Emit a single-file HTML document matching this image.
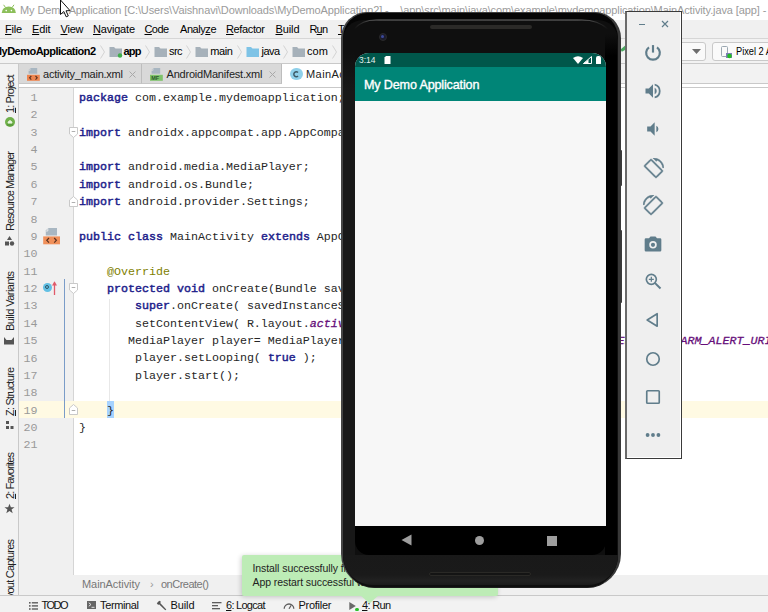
<!DOCTYPE html><html><head><meta charset="utf-8"><style>
*{box-sizing:border-box;margin:0;padding:0}
body{width:768px;height:612px;overflow:hidden;position:relative;background:#fff;font-family:"Liberation Sans",sans-serif;font-size:11px;color:#000}
.a{position:absolute}
.t{position:absolute;white-space:pre;line-height:1}
.code{position:absolute;left:79px;top:89.8px;font-family:"Liberation Mono",monospace;font-size:11.67px;line-height:17.38px;white-space:pre;color:#262626}
.ln{position:absolute;left:18.5px;width:19px;top:89.9px;font-family:"Liberation Mono",monospace;font-size:11.67px;line-height:17.38px;white-space:pre;color:#999;text-align:right}
.kw{color:#20208a;-webkit-text-stroke:0.45px #20208a}
.an{color:#808000}
.sf{color:#660e7a;font-style:italic;-webkit-text-stroke:0.3px #660e7a}
.ul{text-decoration:underline;text-underline-offset:1px}
</style></head><body>
<div class="a" style="left:0;top:0;width:768px;height:20px;background:#fff"></div>
<svg class="a" style="left:1px;top:3px" width="16" height="12" viewBox="0 0 16 12"><path d="M0.7 10 A7.1 6.6 0 0 1 14.9 10 Z" fill="#8cbf5a"/><path d="M2.6 1.8 L4.6 4.6 M13 1.8 L11 4.6" stroke="#8cbf5a" stroke-width="1"/><circle cx="5.2" cy="7.6" r="0.8" fill="#fff"/><circle cx="10.4" cy="7.6" r="0.8" fill="#fff"/></svg>
<div class="t" style="left:20px;top:4.69px;font-size:11px;color:#9b9b9b;letter-spacing:-0.11px;">My Demo Application [C:\Users\Vaishnavi\Downloads\MyDemoApplication2] - ...\app\src\main\java\com\example\mydemoapplication\MainActivity.java [app] - Android Studio</div>
<div class="a" style="left:0;top:20px;width:768px;height:19px;background:#f0f0f0;border-bottom:1px solid #d6d6d6"></div>
<div class="t" style="left:5px;top:23.69px;font-size:11px;color:#000;letter-spacing:-0.242px;"><span class="ul">F</span>ile</div>
<div class="t" style="left:32px;top:23.69px;font-size:11px;color:#000;letter-spacing:-0.152px;"><span class="ul">E</span>dit</div>
<div class="t" style="left:60.5px;top:23.69px;font-size:11px;color:#000;letter-spacing:-0.215px;"><span class="ul">V</span>iew</div>
<div class="t" style="left:93px;top:23.69px;font-size:11px;color:#000;letter-spacing:-0.202px;"><span class="ul">N</span>avigate</div>
<div class="t" style="left:144.5px;top:23.69px;font-size:11px;color:#000;letter-spacing:-0.599px;"><span class="ul">C</span>ode</div>
<div class="t" style="left:180px;top:23.69px;font-size:11px;color:#000;letter-spacing:-0.439px;">Analy<span class="ul">z</span>e</div>
<div class="t" style="left:226px;top:23.69px;font-size:11px;color:#000;letter-spacing:-0.368px;"><span class="ul">R</span>efactor</div>
<div class="t" style="left:275.5px;top:23.69px;font-size:11px;color:#000;letter-spacing:-0.115px;"><span class="ul">B</span>uild</div>
<div class="t" style="left:309.5px;top:23.69px;font-size:11px;color:#000;letter-spacing:-0.840px;">R<span class="ul">u</span>n</div>
<div class="t" style="left:338px;top:23.69px;font-size:11px;color:#000;letter-spacing:0.080px;"><span class="ul">T</span>ools</div>
<div class="a" style="left:0;top:39px;width:768px;height:25px;background:#f2f2f2;border-bottom:1px solid #c9c9c9"></div>
<div class="t" style="left:-1px;top:46.19px;font-size:11px;color:#000;letter-spacing:-0.514px;font-weight:bold;">lyDemoApplication2</div>
<svg class="a" style="left:99.5px;top:45px" width="6" height="14" viewBox="0 0 6 14"><path d="M0.5 0.5 L4.5 7 L0.5 13.5" stroke="#d0d0d0" stroke-width="0.9" fill="none"/></svg>
<svg class="a" style="left:108.5px;top:46px" width="14" height="12" viewBox="0 0 14 12"><path d="M0.5 1 H5 L6.5 2.5 H13 V11 H0.5 Z" fill="#a6b1ba"/><circle cx="11" cy="9.5" r="2.2" fill="#3fae4a"/></svg>
<div class="t" style="left:123.5px;top:46.19px;font-size:11px;color:#000;letter-spacing:-0.778px;font-weight:bold;">app</div>
<svg class="a" style="left:144.5px;top:45px" width="6" height="14" viewBox="0 0 6 14"><path d="M0.5 0.5 L4.5 7 L0.5 13.5" stroke="#d0d0d0" stroke-width="0.9" fill="none"/></svg>
<svg class="a" style="left:153.5px;top:46px" width="14" height="12" viewBox="0 0 14 12"><path d="M0.5 1 H5 L6.5 2.5 H13 V11 H0.5 Z" fill="#a6b1ba"/></svg>
<div class="t" style="left:169px;top:46.19px;font-size:11px;color:#000;letter-spacing:-0.582px;">src</div>
<svg class="a" style="left:186px;top:45px" width="6" height="14" viewBox="0 0 6 14"><path d="M0.5 0.5 L4.5 7 L0.5 13.5" stroke="#d0d0d0" stroke-width="0.9" fill="none"/></svg>
<svg class="a" style="left:194.5px;top:46px" width="14" height="12" viewBox="0 0 14 12"><path d="M0.5 1 H5 L6.5 2.5 H13 V11 H0.5 Z" fill="#a6b1ba"/></svg>
<div class="t" style="left:210.3px;top:46.19px;font-size:11px;color:#000;letter-spacing:-0.448px;">main</div>
<svg class="a" style="left:236.5px;top:45px" width="6" height="14" viewBox="0 0 6 14"><path d="M0.5 0.5 L4.5 7 L0.5 13.5" stroke="#d0d0d0" stroke-width="0.9" fill="none"/></svg>
<svg class="a" style="left:245.5px;top:46px" width="14" height="12" viewBox="0 0 14 12"><path d="M0.5 1 H5 L6.5 2.5 H13 V11 H0.5 Z" fill="#7ec3e6"/></svg>
<div class="t" style="left:261.5px;top:46.19px;font-size:11px;color:#000;letter-spacing:-0.560px;">java</div>
<svg class="a" style="left:282.5px;top:45px" width="6" height="14" viewBox="0 0 6 14"><path d="M0.5 0.5 L4.5 7 L0.5 13.5" stroke="#d0d0d0" stroke-width="0.9" fill="none"/></svg>
<svg class="a" style="left:292px;top:46px" width="14" height="12" viewBox="0 0 14 12"><path d="M0.5 1 H5 L6.5 2.5 H13 V11 H0.5 Z" fill="#a6b1ba"/></svg>
<div class="t" style="left:307px;top:46.19px;font-size:11px;color:#000;letter-spacing:0.110px;">com</div>
<svg class="a" style="left:331.5px;top:45px" width="6" height="14" viewBox="0 0 6 14"><path d="M0.5 0.5 L4.5 7 L0.5 13.5" stroke="#d0d0d0" stroke-width="0.9" fill="none"/></svg>
<svg class="a" style="left:620px;top:45px" width="6" height="7" viewBox="0 0 6 7"><path d="M0.5 4.5 L5.5 0.3 V4.8 L1.8 6.8 Z" fill="#4aa860"/></svg>
<div class="a" style="left:640px;top:42px;width:66px;height:19px;background:#fafafa;border:1px solid #c9c9c9;border-radius:3px"></div>
<svg class="a" style="left:692px;top:49px" width="9" height="6"><path d="M0 0 H9 L4.5 5 Z" fill="#6e6e6e"/></svg>
<div class="a" style="left:712px;top:42px;width:70px;height:19px;background:#fafafa;border:1px solid #c9c9c9;border-radius:3px"></div>
<svg class="a" style="left:721px;top:46px" width="12" height="13" viewBox="0 0 12 13"><rect x="0.5" y="0.5" width="6" height="10" rx="1" fill="none" stroke="#9aa7b0"/><rect x="5" y="7" width="6" height="5" fill="#7d7db8"/><circle cx="8.5" cy="10" r="2.3" fill="#22bb22"/></svg>
<div class="t" style="left:736px;top:46.49px;font-size:11px;color:#000;transform:scaleX(0.84);transform-origin:0 0;">Pixel 2 API</div>
<div class="a" style="left:0;top:64px;width:19px;height:531px;background:#f2f2f2;border-right:1px solid #c9c9c9"></div>
<div class="a" style="left:19px;top:64px;width:749px;height:20px;background:#f2f2f2;border-bottom:1px solid #c9c9c9"></div>
<div class="a" style="left:19px;top:84px;width:749px;height:4px;background:#fff;border-bottom:1px solid #c9c9c9"></div>
<div class="a" style="left:19px;top:64px;width:123px;height:20px;background:#d9d9d9;border-right:1px solid #bdbdbd;border-bottom:1px solid #c6c6c6"></div>
<div class="a" style="left:142px;top:64px;width:140px;height:20px;background:#d9d9d9;border-right:1px solid #bdbdbd;border-bottom:1px solid #c6c6c6"></div>
<div class="a" style="left:282px;top:64px;width:120px;height:23px;background:#fff"></div>
<div class="t" style="left:43px;top:68.69px;font-size:11px;color:#222;letter-spacing:-0.234px;">activity_main.xml</div>
<div class="t" style="left:166.5px;top:68.69px;font-size:11px;color:#222;letter-spacing:-0.203px;">AndroidManifest.xml</div>
<div class="t" style="left:306px;top:68.69px;font-size:11px;color:#222;letter-spacing:0.431px;">MainActivity.java</div>
<div class="t" style="left:5.26px;top:113px;font-size:11px;color:#222;letter-spacing:-0.885px;transform:rotate(-90deg);transform-origin:0 0"><span class="ul">1</span>: Project</div>
<div class="a" style="left:5px;top:117px;width:10px;height:10px;border-radius:50%;background:#6fb04a"></div>
<svg class="a" style="left:6px;top:118px" width="8" height="8" viewBox="0 0 8 8"><path d="M2 5 A2 2 0 0 1 6 5 Z M4 2 V4" stroke="#e8f4e0" stroke-width="1" fill="#e8f4e0"/><path d="M1 7 L7 7" stroke="#4a8a30"/></svg>
<div class="t" style="left:5.26px;top:230.6px;font-size:11px;color:#222;letter-spacing:-0.903px;transform:rotate(-90deg);transform-origin:0 0">Resource Manager</div>
<svg class="a" style="left:4px;top:236px" width="11" height="10" viewBox="0 0 11 10"><path d="M5.5 0 L8 4 H3 Z" fill="#555"/><rect x="1" y="5.5" width="4" height="4" fill="#555"/><circle cx="8" cy="7.5" r="2.2" fill="#555"/></svg>
<div class="t" style="left:5.26px;top:330.5px;font-size:11px;color:#222;letter-spacing:-0.543px;transform:rotate(-90deg);transform-origin:0 0">Build Variants</div>
<svg class="a" style="left:3px;top:336px" width="12" height="9" viewBox="0 0 12 9"><path d="M1 8.5 V1 L3.5 4 H8.5 L11 1 V8.5 Z" fill="#555"/></svg>
<div class="t" style="left:5.26px;top:415.9px;font-size:11px;color:#222;letter-spacing:-0.769px;transform:rotate(-90deg);transform-origin:0 0"><span class="ul">Z</span>: Structure</div>
<svg class="a" style="left:6px;top:421px" width="8" height="9" viewBox="0 0 8 9"><rect x="0" y="0" width="3" height="3" fill="#555"/><rect x="0" y="5" width="3" height="3" fill="#555"/><rect x="4.5" y="5" width="3" height="3" fill="#555"/></svg>
<div class="t" style="left:5.26px;top:499.4px;font-size:11px;color:#222;letter-spacing:-0.952px;transform:rotate(-90deg);transform-origin:0 0"><span class="ul">2</span>: Favorites</div>
<svg class="a" style="left:4px;top:503px" width="11" height="11" viewBox="0 0 24 24"><path d="M12 1.5 L15 9 H23 L16.5 14 L19 22.5 L12 17.5 L5 22.5 L7.5 14 L1 9 H9 Z" fill="#555"/></svg>
<div class="t" style="left:5.26px;top:609.2px;font-size:11px;color:#222;letter-spacing:-0.766px;transform:rotate(-90deg);transform-origin:0 0">Layout Captures</div>
<svg class="a" style="left:27px;top:68px" width="13" height="13" viewBox="0 0 13 13"><path d="M3.5 0 H10.2 V5.7 H1.6 V2 Z" fill="#a8b6c1"/><path d="M3 0.2 V2.3 H1" stroke="#d9d9d9" stroke-width="0.8" fill="none"/><rect x="0" y="6.8" width="12.8" height="6" fill="#ee8550"/><path d="M4.3 8 L2.6 9.8 L4.3 11.6 M8.5 8 L10.2 9.8 L8.5 11.6" stroke="#5a3220" stroke-width="1.1" fill="none"/></svg>
<svg class="a" style="left:150px;top:68px" width="13" height="13" viewBox="0 0 13 13"><path d="M3.5 0 H10.2 V5.7 H1.6 V2 Z" fill="#a8b6c1"/><path d="M3 0.2 V2.3 H1" stroke="#d9d9d9" stroke-width="0.8" fill="none"/><rect x="0" y="6.8" width="12.8" height="6" fill="#7ec36a"/><text x="1.2" y="12.3" font-family="Liberation Sans" font-size="5.5" font-weight="bold" fill="#2d5a2d">MF</text></svg>
<div class="a" style="left:290px;top:67.5px;width:12.5px;height:12.5px;border-radius:50%;background:#8fd0ea"></div>
<svg class="a" style="left:290px;top:67.5px" width="12.5" height="12.5" viewBox="0 0 12.5 12.5"><path d="M8 4.6 A2.4 2.4 0 1 0 8 7.9" stroke="#3d5a66" stroke-width="1.5" fill="none"/></svg>
<svg class="a" style="left:128.5px;top:70.5px" width="7" height="7" viewBox="0 0 7 7"><path d="M0.5 0.5 L6.5 6.5 M6.5 0.5 L0.5 6.5" stroke="#a8a8a8" stroke-width="1"/></svg>
<svg class="a" style="left:269px;top:70.5px" width="7" height="7" viewBox="0 0 7 7"><path d="M0.5 0.5 L6.5 6.5 M6.5 0.5 L0.5 6.5" stroke="#a8a8a8" stroke-width="1"/></svg>
<div class="a" style="left:19px;top:88px;width:55px;height:487px;background:#f0f0f0;border-right:1px solid #d5d5d5"></div>
<div class="a" style="left:19px;top:400.7px;width:749px;height:17.33px;background:#fffae3"></div>
<svg class="a" style="left:43px;top:228px" width="17.5" height="17" viewBox="0 0 17.5 17"><path d="M5.2 0 H14 V7.4 H2.8 V2.6 Z" fill="#a9b7c2"/><path d="M4.8 0.2 V3 H2.9" stroke="#eee" stroke-width="0.9" fill="none"/><rect x="0.2" y="8.4" width="16.8" height="7.9" fill="#f0905a"/><path d="M6 10 L3.8 12.3 L6 14.6 M11.2 10 L13.4 12.3 L11.2 14.6" stroke="#5a3220" stroke-width="1.2" fill="none"/></svg>
<div class="a" style="left:42.9px;top:282.9px;width:9px;height:9px;border-radius:50%;background:#62c0e4"></div>
<div class="a" style="left:45.4px;top:285.4px;width:4px;height:4px;border-radius:50%;border:1px solid #2e5566"></div>
<svg class="a" style="left:51.5px;top:280.5px" width="5" height="14" viewBox="0 0 5 14"><path d="M2.5 1.5 V14" stroke="#e05a6a" stroke-width="1.3"/><path d="M0 4.5 L2.5 0.3 L5 4.5 Z" fill="#e05a6a"/></svg>
<div class="a" style="left:64px;top:279.2px;width:1.3px;height:138.5px;background:#7a9cc8"></div>
<svg class="a" style="left:69px;top:127px" width="9.5" height="11.5" viewBox="0 0 9.5 11.5"><path d="M0.5 0.5 H8.5 V7 L4.5 10.5 L0.5 7 Z" fill="#fff" stroke="#c9c9c9" stroke-width="1"/><path d="M2.7 4.5 H6.3" stroke="#b0b0b0" stroke-width="1"/></svg>
<svg class="a" style="left:69px;top:196px" width="9.5" height="11.5" viewBox="0 0 9.5 11.5"><path d="M0.5 10.5 H8.5 V4 L4.5 0.5 L0.5 4 Z" fill="#fff" stroke="#c9c9c9" stroke-width="1"/><path d="M2.7 6.5 H6.3" stroke="#b0b0b0" stroke-width="1"/></svg>
<svg class="a" style="left:69px;top:283px" width="9.5" height="11.5" viewBox="0 0 9.5 11.5"><path d="M0.5 0.5 H8.5 V7 L4.5 10.5 L0.5 7 Z" fill="#fff" stroke="#c9c9c9" stroke-width="1"/><path d="M2.7 4.5 H6.3" stroke="#b0b0b0" stroke-width="1"/></svg>
<svg class="a" style="left:69px;top:404px" width="9.5" height="11.5" viewBox="0 0 9.5 11.5"><path d="M0.5 10.5 H8.5 V4 L4.5 0.5 L0.5 4 Z" fill="#fff" stroke="#c9c9c9" stroke-width="1"/><path d="M2.7 6.5 H6.3" stroke="#b0b0b0" stroke-width="1"/></svg>
<div class="a" style="left:108.5px;top:298.5px;width:1px;height:102px;background:#e8e8e8"></div>
<div class="ln">1
2
3
4
5
6
7
8
9
10
11
12
13
14
15
16
17
18
19
20
21</div>
<div class="a" style="left:107px;top:401px;width:7px;height:16.8px;background:#a6d2ff"></div>
<div class="code"><span class="kw">package</span> com.example.mydemoapplication;

<span class="kw">import</span> androidx.appcompat.app.AppCompatActivity;

<span class="kw">import</span> android.media.MediaPlayer;
<span class="kw">import</span> android.os.Bundle;
<span class="kw">import</span> android.provider.Settings;

<span class="kw">public</span> <span class="kw">class</span> MainActivity <span class="kw">extends</span> AppCompatActivity {

    <span class="an">@Override</span>
    <span class="kw">protected</span> <span class="kw">void</span> onCreate(Bundle savedInstanceState) {
        <span class="kw">super</span>.onCreate( savedInstanceState );
        setContentView( R.layout.<span class="sf">activity_main</span> );
       MediaPlayer player= MediaPlayer.create( getContext(),Settings.System.<span class="sf">DEFAULT_ALARM_ALERT_URI</span> );
        player.setLooping( <span class="kw">true</span> );
        player.start();

    }
}
</div>
<div class="a" style="left:19px;top:575px;width:749px;height:20px;background:#f0f0f0"></div>
<div class="t" style="left:82px;top:578.69px;font-size:11px;color:#777;letter-spacing:-0.062px;">MainActivity</div>
<div class="t" style="left:150px;top:578.69px;font-size:11px;color:#999;">›</div>
<div class="t" style="left:161px;top:578.69px;font-size:11px;color:#777;letter-spacing:-0.509px;">onCreate()</div>
<div class="a" style="left:0;top:595px;width:768px;height:17px;background:#f2f2f2;border-top:1px solid #c9c9c9"></div>
<div class="t" style="left:41.5px;top:599.99px;font-size:11px;color:#111;letter-spacing:-1.526px;">TODO</div>
<div class="t" style="left:100px;top:599.99px;font-size:11px;color:#111;letter-spacing:-0.367px;">Terminal</div>
<div class="t" style="left:170.5px;top:599.99px;font-size:11px;color:#111;letter-spacing:-0.115px;">Build</div>
<div class="t" style="left:226px;top:599.99px;font-size:11px;color:#111;letter-spacing:-0.720px;"><span class="ul">6</span>: Logcat</div>
<div class="t" style="left:298.5px;top:599.99px;font-size:11px;color:#111;letter-spacing:-0.263px;">Profiler</div>
<div class="t" style="left:362px;top:599.99px;font-size:11px;color:#111;letter-spacing:-0.682px;"><span class="ul">4</span>: Run</div>
<svg class="a" style="left:28.5px;top:601.5px" width="9.5" height="8" viewBox="0 0 9.5 8"><g fill="#5e5e5e"><rect x="0" y="0" width="1.6" height="1.6"/><rect x="0" y="3.1" width="1.6" height="1.6"/><rect x="0" y="6.2" width="1.6" height="1.6"/><rect x="2.8" y="0.1" width="6.5" height="1.4"/><rect x="2.8" y="3.2" width="6.5" height="1.4"/><rect x="2.8" y="6.3" width="6.5" height="1.4"/></g></svg>
<svg class="a" style="left:87px;top:601px" width="9" height="8" viewBox="0 0 9 8"><rect width="9" height="8" fill="#666"/><path d="M1.8 1.8 L4 3.5 L1.8 5.2" stroke="#eee" stroke-width="0.9" fill="none"/><path d="M4.5 6.3 H7.5" stroke="#eee" stroke-width="0.9"/></svg>
<svg class="a" style="left:155.5px;top:600px" width="11" height="10.5" viewBox="0 0 11 10.5"><path d="M0.8 3.2 L3.2 0.8 L5 1.8 L4.2 3 L10.3 9.5 L9.3 10.3 L3 4.2 L2.2 5 Z" fill="#555"/></svg>
<svg class="a" style="left:212px;top:602px" width="10" height="7.5" viewBox="0 0 10 7.5"><g fill="#5e5e5e"><rect x="0" y="0" width="9.5" height="1.3"/><rect x="0" y="3" width="6" height="1.3"/><rect x="0" y="6" width="8" height="1.3"/></g></svg>
<svg class="a" style="left:283px;top:601.5px" width="12" height="7" viewBox="0 0 12 7"><path d="M1.2 6.8 A4.8 4.8 0 0 1 10.8 6.8" stroke="#5e5e5e" stroke-width="1.3" fill="none"/><path d="M6 6.8 L8.2 3.2" stroke="#5e5e5e" stroke-width="1.2"/></svg>
<svg class="a" style="left:349px;top:601.5px" width="7" height="8" viewBox="0 0 7 8"><path d="M0.3 0 L6.8 4 L0.3 8 Z" fill="#6a6a6a"/></svg>
<div class="a" style="left:355.4px;top:607.5px;width:3.6px;height:3.6px;border-radius:50%;background:#2bc02b"></div>
<div class="a" style="left:241.5px;top:555px;width:256px;height:40.5px;background:#bdecb6;border-radius:2px;box-shadow:-1px 1px 5px rgba(0,0,0,0.2)"></div>
<svg class="a" style="left:360px;top:595px" width="19" height="9" viewBox="0 0 19 9"><path d="M0 0 H19 L9.5 8.5 Z" fill="#bdecb6"/></svg>
<div class="t" style="left:252.5px;top:563.11px;font-size:10.5px;color:#222;letter-spacing:-0.08px;">Install successfully finished in 3 s 61 ms.</div>
<div class="t" style="left:252.5px;top:576.61px;font-size:10.5px;color:#222;letter-spacing:-0.08px;">App restart successful without requiring a re-install.</div>
<div class="a" style="left:616px;top:149.5px;width:6px;height:36px;background:#3a3a3a;border-radius:1px"></div>
<div class="a" style="left:616px;top:229.5px;width:6px;height:73.5px;background:#3a3a3a;border-radius:1px"></div>
<div class="a" style="left:340.5px;top:12px;width:280px;height:576px;border-radius:26px 26px 34px 34px;background:#050505;border-style:solid;border-color:#3c3c3c #383838 #1e1e1e #454545;border-width:1px 3px 1px 2.5px"></div>
<div class="a" style="left:342.5px;top:19.5px;width:275px;height:567.5px;border-radius:20px 20px 31px 31px;background:#0f0f0f"></div>
<div class="a" style="left:605px;top:34px;width:12px;height:521px;background:linear-gradient(#0f0f0f,#000 22px)"></div>
<div class="a" style="left:342.5px;top:52px;width:12px;height:503px;background:linear-gradient(#0f0f0f,#181818 40px)"></div>
<svg class="a" style="left:350px;top:17px" width="262" height="16" viewBox="0 0 262 16"><defs><linearGradient id="rg" x1="0" x2="1"><stop offset="0" stop-color="#6e6e6e" stop-opacity="0"/><stop offset="0.1" stop-color="#707070"/><stop offset="0.88" stop-color="#707070"/><stop offset="1" stop-color="#6e6e6e" stop-opacity="0"/></linearGradient></defs><path d="M4 12 Q12 3 26 3 H232 Q248 3 258 12" stroke="url(#rg)" stroke-width="1.1" fill="none"/></svg>
<div class="a" style="left:342.5px;top:555px;width:275px;height:29.5px;border-radius:0 0 30px 30px;background:linear-gradient(#191919 0,#1a1a1a 20px,#222 26px,#1c1c1c 29.5px)"></div>
<div class="a" style="left:429.5px;top:25px;width:102px;height:4px;border-radius:2px;background:#2b2a28"></div>
<div class="a" style="left:378.5px;top:32.5px;width:8px;height:8px;border-radius:50%;background:#1b1b2e;border:1px solid #2a2a2a"></div>
<div class="a" style="left:381px;top:35px;width:3px;height:3px;border-radius:50%;background:#3c4a9a"></div>
<div class="a" style="left:354.5px;top:52.5px;width:251px;height:502px;border-radius:14px 14px 14px 14px;background:#000"></div>
<div class="a" style="left:354.5px;top:52.5px;width:251px;height:473.5px;border-radius:14px 14px 0 0;background:#f7f7f7;overflow:hidden"><div class="a" style="left:0;top:0;width:251px;height:14px;background:#00574b"></div><div class="a" style="left:0;top:14px;width:251px;height:34px;background:#008577"></div></div>
<div class="t" style="left:359px;top:56.30px;font-size:8.5px;color:#e6f0ee;">3:14</div>
<svg class="a" style="left:384px;top:56px" width="7" height="8" viewBox="0 0 7 8"><path d="M2 0 H6.5 V8 H0.5 V1.5 Z" fill="#fff"/></svg>
<svg class="a" style="left:573px;top:56px" width="10" height="8" viewBox="0 0 10 8"><path d="M0 2 Q5 -1.5 10 2 L5 8 Z" fill="#fff"/></svg>
<svg class="a" style="left:583px;top:56px" width="9" height="8" viewBox="0 0 9 8"><path d="M8.5 0.5 V7.5 H0.5 Z" fill="none" stroke="#fff" stroke-width="1"/><path d="M5.5 3.5 V8 H0 Z" fill="#fff"/></svg>
<div class="a" style="left:595.5px;top:56px;width:5.5px;height:8px;background:#fff;border-radius:2px 2px 0.5px 0.5px"></div>
<div class="t" style="left:364px;top:78.63px;font-size:12.6px;color:#fff;letter-spacing:-0.159px;-webkit-text-stroke:0.35px #fff;">My Demo Application</div>
<svg class="a" style="left:401px;top:534px" width="11" height="12" viewBox="0 0 11 12"><path d="M10.5 0.5 V11.5 L0.5 6 Z" fill="#9e9e9e"/></svg>
<div class="a" style="left:474.8px;top:535.8px;width:9.4px;height:9.4px;border-radius:50%;background:#9e9e9e"></div>
<div class="a" style="left:546.5px;top:535.5px;width:10px;height:10px;background:#9e9e9e"></div>
<div class="a" style="left:429px;top:571.5px;width:102px;height:4px;border-radius:2px;background:#141414;border:1px solid #2a2926"></div>
<div class="a" style="left:625px;top:11px;width:57px;height:447.5px;background:#efefef;border:1px solid #3a3a3a;border-left:2px solid #6a6a6a;box-shadow:inset -1px -1px 0 #fff"></div>
<div class="a" style="left:639px;top:23.5px;width:6px;height:1.2px;background:#607d8b"></div>
<svg class="a" style="left:661px;top:20px" width="8" height="8" viewBox="0 0 8 8"><path d="M1 1 L7 7 M7 1 L1 7" stroke="#607d8b" stroke-width="1.2"/></svg>
<svg class="a" style="left:643.0px;top:43.2px" width="20" height="20" viewBox="0 0 24 24"><path d="M12 2.5 V11.5" stroke="#607d8b" stroke-width="2.6" fill="none"/><path d="M16.8 5.2 A8.2 8.2 0 1 1 7.2 5.2" stroke="#607d8b" stroke-width="2.6" fill="none"/></svg>
<svg class="a" style="left:643.0px;top:81.0px" width="20" height="20" viewBox="0 0 24 24"><path d="M3 9 V15 H7 L12 20 V4 L7 9 Z M16.5 12 A4.5 4.5 0 0 0 14 8 V16 A4.5 4.5 0 0 0 16.5 12 Z M14 3.2 V5.3 A7 7 0 0 1 14 18.7 V20.8 A9 9 0 0 0 14 3.2 Z" fill="#607d8b"/></svg>
<svg class="a" style="left:643.0px;top:119.4px" width="20" height="20" viewBox="0 0 24 24"><path d="M5 9 V15 H9 L14 20 V4 L9 9 Z M18.5 12 A4.5 4.5 0 0 0 16 8 V16 A4.5 4.5 0 0 0 18.5 12 Z" fill="#607d8b"/></svg>
<svg class="a" style="left:642.5px;top:157.5px" width="21" height="21" viewBox="0 0 24 24"><path d="M16.48 2.52c3.27 1.55 5.61 4.72 5.97 8.48h1.5C23.44 4.84 18.29 0 12 0l-.66.03 3.81 3.81 1.33-1.32z M10.23 1.75c-.59-.59-1.54-.59-2.12 0L1.75 8.11c-.59.59-.59 1.540 0 2.12l12.02 12.02c.59.59 1.54.59 2.12 0l6.36-6.36c.59-.59.59-1.54 0-2.12L10.23 1.75z M14.83 21.19L2.81 9.17l6.36-6.36 12.02 12.02-6.360 6.36z" fill="#607d8b" fill-rule="evenodd" stroke="#607d8b" stroke-width="0.6"/></svg>
<svg class="a" style="left:642.5px;top:195.1px" width="21" height="21" viewBox="0 0 24 24"><g transform="translate(24 0) scale(-1 1)"><path d="M16.48 2.52c3.27 1.55 5.61 4.72 5.97 8.48h1.5C23.44 4.84 18.29 0 12 0l-.66.03 3.81 3.81 1.33-1.32z M10.23 1.75c-.59-.59-1.54-.59-2.12 0L1.75 8.11c-.59.59-.59 1.540 0 2.12l12.02 12.02c.59.59 1.54.59 2.12 0l6.36-6.36c.59-.59.59-1.54 0-2.12L10.23 1.75z M14.83 21.19L2.81 9.17l6.36-6.36 12.02 12.02-6.360 6.36z" fill="#607d8b" fill-rule="evenodd" stroke="#607d8b" stroke-width="0.6"/></g></svg>
<svg class="a" style="left:643.0px;top:233.8px" width="20" height="20" viewBox="0 0 24 24"><path d="M9 3 L7.2 5 H3.5 A1.5 1.5 0 0 0 2 6.5 V19.5 A1.5 1.5 0 0 0 3.5 21 H20.5 A1.5 1.5 0 0 0 22 19.5 V6.5 A1.5 1.5 0 0 0 20.5 5 H16.8 L15 3 Z M12 8.5 A4.5 4.5 0 1 1 12 17.5 A4.5 4.5 0 1 1 12 8.5 Z M12 10.5 A2.5 2.5 0 1 0 12 15.5 A2.5 2.5 0 1 0 12 10.5 Z" fill="#607d8b" fill-rule="evenodd"/></svg>
<svg class="a" style="left:643.0px;top:271.4px" width="20" height="20" viewBox="0 0 24 24"><circle cx="10" cy="10" r="6" stroke="#607d8b" stroke-width="2" fill="none"/><path d="M14.5 14.5 L21 21" stroke="#607d8b" stroke-width="2.4"/><path d="M10 7 V13 M7 10 H13" stroke="#607d8b" stroke-width="1.5"/></svg>
<svg class="a" style="left:643.0px;top:310.3px" width="20" height="20" viewBox="0 0 24 24"><path d="M17 4.5 V19.5 L5 12 Z" stroke="#607d8b" stroke-width="2" fill="none" stroke-linejoin="round"/></svg>
<svg class="a" style="left:643.0px;top:349.0px" width="20" height="20" viewBox="0 0 24 24"><circle cx="12" cy="12" r="7.5" stroke="#607d8b" stroke-width="2" fill="none"/></svg>
<svg class="a" style="left:643.0px;top:386.8px" width="20" height="20" viewBox="0 0 24 24"><rect x="4.5" y="4.5" width="15" height="15" rx="1" stroke="#607d8b" stroke-width="2" fill="none"/></svg>
<svg class="a" style="left:643.0px;top:425.2px" width="20" height="20" viewBox="0 0 24 24"><circle cx="5.5" cy="12" r="2.3" fill="#607d8b"/><circle cx="12" cy="12" r="2.3" fill="#607d8b"/><circle cx="18.5" cy="12" r="2.3" fill="#607d8b"/></svg>
<svg class="a" style="left:59px;top:-1px" width="13" height="19" viewBox="0 0 13 19"><path d="M1.5 1 V15.5 L4.8 12.5 L7.2 17.8 L9.3 16.9 L7 11.8 L11 11.6 Z" fill="#fff" stroke="#111" stroke-width="1"/></svg>
</body></html>
